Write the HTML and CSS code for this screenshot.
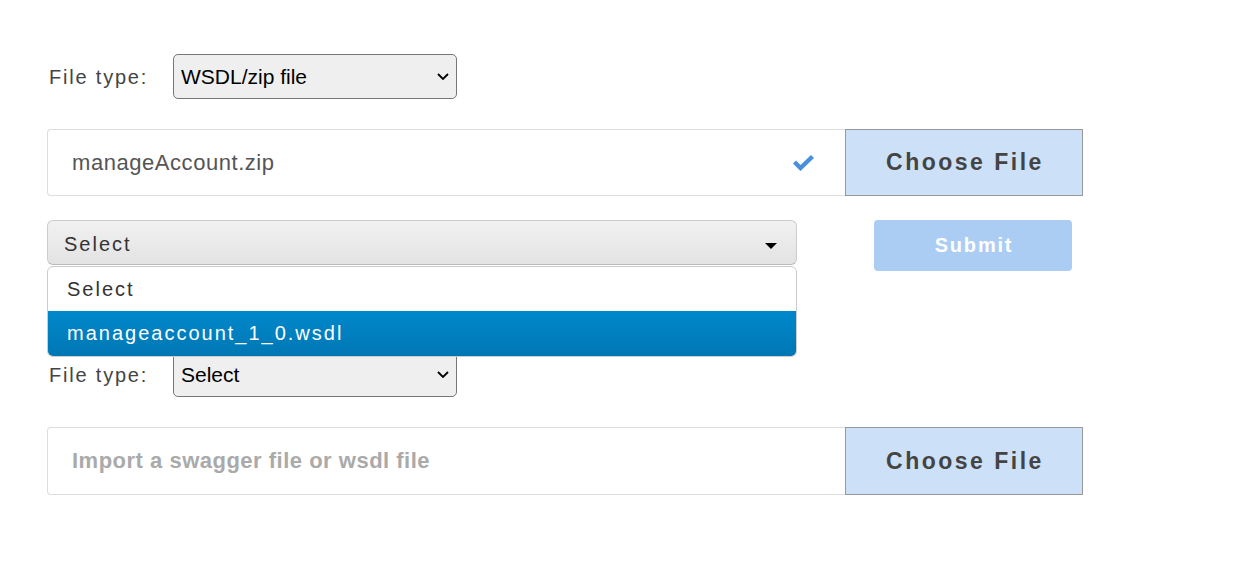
FILE: index.html
```html
<!DOCTYPE html>
<html lang="en">
<head>
<meta charset="utf-8">
<title>Import file</title>
<link rel="stylesheet" href="styles.css">
</head>
<body>
<div class="page">
  <div class="field-row">
    <label class="label">File type:</label>
    <div class="select-wrap">
      <select class="select"><option>WSDL/zip file</option><option>Swagger file</option></select>
      <svg class="chev" viewBox="0 0 12 7" width="12" height="7"><polyline points="1,1 6,6 11,1" fill="none" stroke="#000" stroke-width="1.8"/></svg>
    </div>
  </div>

  <div class="file-row">
    <div class="file-text">
      <span class="file-name">manageAccount.zip</span>
      <svg class="check" viewBox="0 0 23 17" width="23" height="17"><polyline points="2.5,8 8.5,14 20.5,2.5" fill="none" stroke="#4a8fdc" stroke-width="4.4"/></svg>
    </div>
    <button class="choose">Choose File</button>
  </div>

  <div class="action-row">
    <div class="dropdown">
      <button class="dropdown-toggle"><span>Select</span><span class="caret"></span></button>
      <ul class="dropdown-menu">
        <li class="item">Select</li>
        <li class="item active">manageaccount_1_0.wsdl</li>
      </ul>
    </div>
    <button class="submit">Submit</button>
  </div>

  <div class="field-row second">
    <label class="label">File type:</label>
    <div class="select-wrap">
      <select class="select"><option>Select</option></select>
      <svg class="chev" viewBox="0 0 12 7" width="12" height="7"><polyline points="1,1 6,6 11,1" fill="none" stroke="#000" stroke-width="1.8"/></svg>
    </div>
  </div>

  <div class="file-row last">
    <div class="file-text">
      <span class="placeholder">Import a swagger file or wsdl file</span>
    </div>
    <button class="choose">Choose File</button>
  </div>
</div>
</body>
</html>
```

FILE: styles.css
```css
* { box-sizing: border-box; }
html, body { margin: 0; padding: 0; background: #fff; }
body { font-family: "Liberation Sans", Arial, sans-serif; color: #333; }

.page { padding: 54px 0 0 47px; }

.field-row { display: flex; align-items: center; height: 45px; }
.field-row.second { margin-top: 81px; }
.label {
  flex: 0 0 126px;
  padding: 2px 0 0 2px;
  font-size: 20px;
  letter-spacing: 1.8px;
  color: #444;
}
.select-wrap { position: relative; width: 284px; height: 45px; }
.select {
  -webkit-appearance: none;
  appearance: none;
  width: 100%;
  height: 100%;
  margin: 0;
  padding: 0 0 0 7px;
  border: 1px solid #767676;
  border-radius: 5px;
  background: #efefef;
  font-family: "Liberation Sans", Arial, sans-serif;
  font-size: 21px;
  color: #000;
}
.chev { position: absolute; right: 8px; top: 19px; pointer-events: none; }

.file-row { display: flex; width: 1036px; height: 67px; margin-top: 30px; }
.file-row.last { height: 68px; }
.file-text {
  flex: 1;
  display: flex;
  align-items: center;
  padding: 0 30px 0 24px;
  border: 1px solid #ddd;
  border-right: none;
  border-radius: 4px 0 0 4px;
}
.file-name { flex: 1; font-size: 22px; letter-spacing: 0.55px; color: #555; }
.placeholder { font-size: 22px; font-weight: bold; letter-spacing: 0.5px; color: #aaa; }
.check { display: block; }
.choose {
  width: 238px;
  margin: 0;
  border: 1px solid #999;
  background: #cce1f8;
  font-family: "Liberation Sans", Arial, sans-serif;
  font-size: 23px;
  font-weight: bold;
  letter-spacing: 2.5px;
  color: #444;
  padding: 0 0 0 2px;
}

.action-row { display: flex; align-items: flex-start; margin-top: 24px; }
.dropdown { position: relative; width: 750px; }
.dropdown-toggle {
  display: flex;
  align-items: center;
  justify-content: space-between;
  width: 100%;
  height: 45px;
  margin: 0;
  padding: 3px 19px 0 16px;
  border: 1px solid #ccc;
  border-bottom-color: #bbb;
  border-radius: 6px;
  background: linear-gradient(#f1f1f1, #e3e3e3);
  font-family: "Liberation Sans", Arial, sans-serif;
  font-size: 20px;
  letter-spacing: 2px;
  color: #333;
  text-align: left;
}
.caret {
  width: 0;
  height: 0;
  border-left: 6px solid transparent;
  border-right: 6px solid transparent;
  border-top: 6px solid #000;
  margin-top: 3px;
}
.dropdown-menu {
  position: absolute;
  top: 46px;
  left: 0;
  width: 100%;
  margin: 0;
  padding: 0;
  list-style: none;
  background: #fff;
  border: 1px solid #ccc;
  border-radius: 6px;
  overflow: hidden;
  z-index: 5;
}
.item {
  display: flex;
  align-items: center;
  height: 44px;
  padding-left: 19px;
  font-size: 20px;
  letter-spacing: 2px;
  color: #333;
}
.item.active {
  height: 45px;
  color: #fff;
  background: linear-gradient(#0088cc, #0077b3);
}

.submit {
  width: 198px;
  height: 51px;
  margin: 0 0 0 77px;
  border: none;
  border-radius: 4px;
  background: #abcdf3;
  font-family: "Liberation Sans", Arial, sans-serif;
  font-size: 20px;
  font-weight: bold;
  letter-spacing: 1.8px;
  color: #fff;
  padding: 0 0 0 2px;
}
```
